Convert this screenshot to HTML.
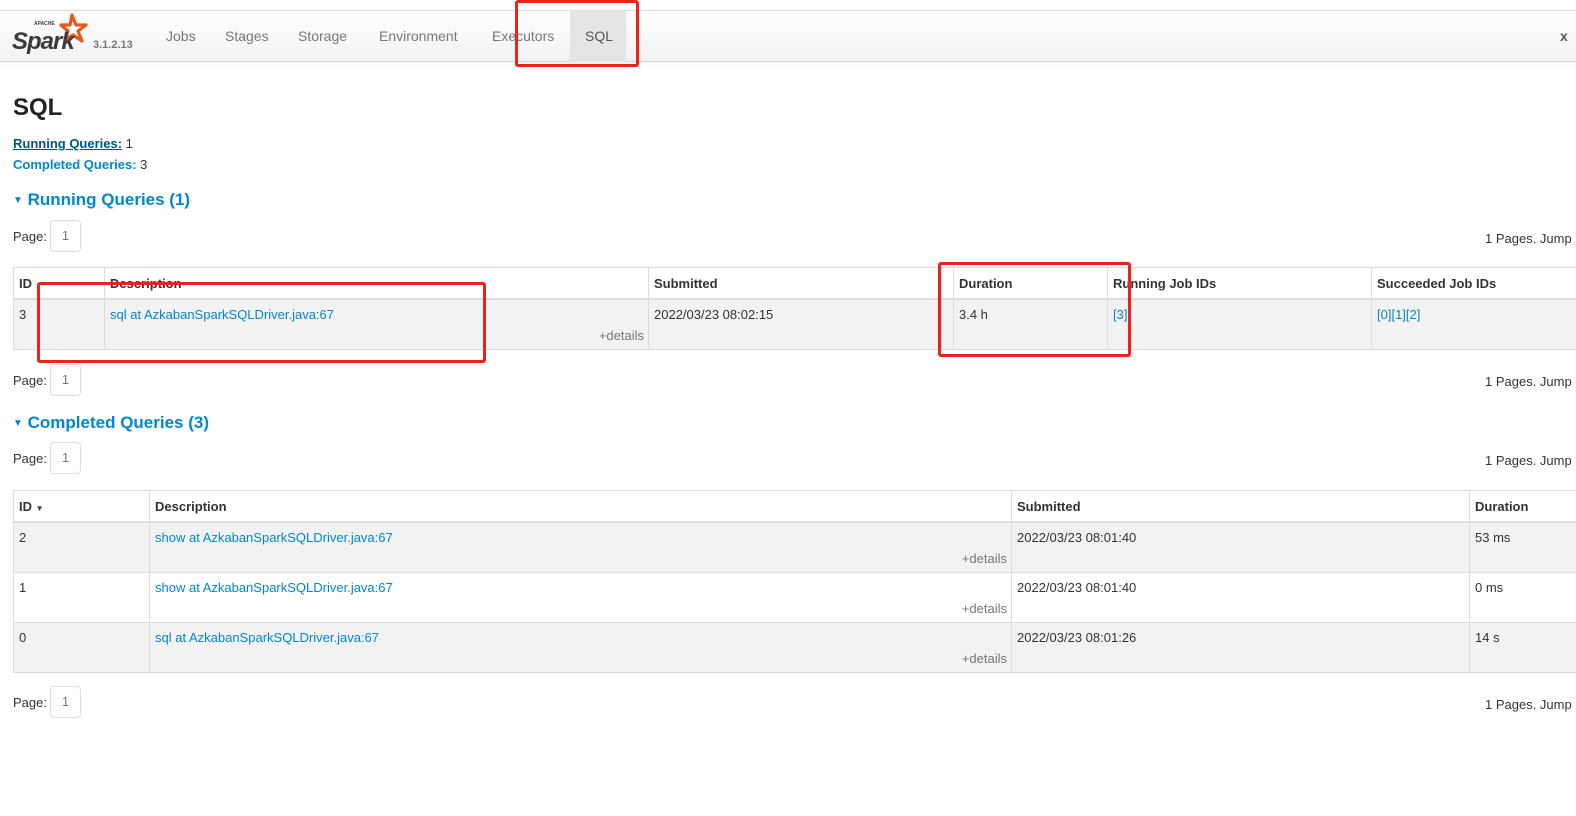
<!DOCTYPE html>
<html><head><meta charset="utf-8">
<style>
*{box-sizing:border-box;margin:0;padding:0}
body{width:1576px;height:816px;overflow:hidden;background:#fff;font-family:"Liberation Sans",sans-serif;font-size:13px;color:#333;position:relative}
.abs{position:absolute;white-space:nowrap}
.nav{position:absolute;left:0;top:10px;width:1576px;height:52px;background:linear-gradient(#fff,#f2f2f2);border-top:1px solid #ddd;border-bottom:1px solid #d4d4d4;box-shadow:0 2px 6px rgba(0,0,0,.06)}
.nav .it{position:absolute;top:17px;font-size:14px;color:#777}
.red{position:absolute;border:3px solid #f0201a;border-radius:3px}
a,.lk{color:#0088cc;text-decoration:none}
.pg{position:absolute;width:31px;height:32px;border:1px solid #ddd;border-radius:4px;color:#777;text-align:center;line-height:30px;font-size:13px}
table{position:absolute;border-collapse:collapse;left:13px}
td,th{border:1px solid #ddd;text-align:left;vertical-align:top;padding:7px 5px;font-size:13px}
th{font-weight:bold;color:#333;height:31px;border-bottom:2px solid #ddd;padding-top:8px}
tr.g td{background:#f2f2f2}
td{height:50px;position:relative}
.det{position:absolute;right:4px;bottom:6px;color:#777}
h4{position:absolute;color:#0088cc;font-size:17px;font-weight:bold}
</style></head><body>
<div class="nav">
  <svg class="abs" style="left:12px;top:2px" width="80" height="44" viewBox="0 0 80 44">
    <path d="M60 2 L64 12 L74 12 L66 18 L70 28 L61 22 L53 27 L56 18 L49 12 L58 12 Z" fill="none" stroke="#e25a1c" stroke-width="3.2" stroke-linejoin="round"/>
    <text x="22" y="12" font-size="5" font-weight="bold" fill="#3c3a3e" font-family="Liberation Sans">APACHE</text>
    <text x="0" y="36" font-size="24" font-weight="bold" font-style="italic" fill="#3c3a3e" font-family="Liberation Sans" letter-spacing="-1">Spark</text>
  </svg>
  <div class="abs" style="left:93px;top:28px;font-size:11px;font-weight:bold;color:#777">3.1.2.13</div>
  <div class="it" style="left:166px">Jobs</div>
  <div class="it" style="left:225px">Stages</div>
  <div class="it" style="left:298px">Storage</div>
  <div class="it" style="left:379px">Environment</div>
  <div class="it" style="left:492px">Executors</div>
  <div style="position:absolute;left:570px;top:0;width:56px;height:51px;background:#e5e5e5"></div>
  <div class="it" style="left:585px;color:#555">SQL</div>
  <div class="it" style="left:1560px;font-weight:bold;color:#555">x</div>
</div>
<div class="red" style="left:515px;top:0px;width:124px;height:67px"></div>

<div class="abs" style="left:13px;top:94px;font-size:24px;font-weight:bold;color:#222">SQL</div>
<div class="abs" style="left:13px;top:136px"><span style="color:#005580;font-weight:bold;text-decoration:underline">Running Queries:</span> 1</div>
<div class="abs" style="left:13px;top:157px"><span class="lk" style="font-weight:bold">Completed Queries:</span> 3</div>

<h4 class="abs" style="left:13px;top:190px"><span style="font-size:10px;position:relative;top:-2px">&#9660;</span> Running Queries (1)</h4>
<div class="abs" style="left:13px;top:229px">Page:</div><div class="pg" style="left:50px;top:220px">1</div>
<div class="abs" style="left:1485px;top:231px">1 Pages. Jump</div>

<table style="top:267px;width:1600px">
<tr><th style="width:91px">ID</th><th style="width:544px">Description</th><th style="width:305px">Submitted</th><th style="width:154px">Duration</th><th style="width:264px">Running Job IDs</th><th>Succeeded Job IDs</th></tr>
<tr class="g"><td>3</td><td><a>sql at AzkabanSparkSQLDriver.java:67</a><span class="det">+details</span></td><td>2022/03/23 08:02:15</td><td>3.4 h</td><td><a>[3]</a></td><td><a>[0][1][2]</a></td></tr>
</table>
<div class="red" style="left:37px;top:282px;width:449px;height:81px"></div>
<div class="red" style="left:938px;top:262px;width:193px;height:95px"></div>

<div class="abs" style="left:13px;top:373px">Page:</div><div class="pg" style="left:50px;top:364px">1</div>
<div class="abs" style="left:1485px;top:374px">1 Pages. Jump</div>

<h4 class="abs" style="left:13px;top:413px"><span style="font-size:10px;position:relative;top:-2px">&#9660;</span> Completed Queries (3)</h4>
<div class="abs" style="left:13px;top:451px">Page:</div><div class="pg" style="left:50px;top:442px">1</div>
<div class="abs" style="left:1485px;top:453px">1 Pages. Jump</div>

<table style="top:490px;width:1600px">
<tr><th style="width:136px">ID <span style="font-size:8px">&#9660;</span></th><th style="width:862px">Description</th><th style="width:458px">Submitted</th><th>Duration</th></tr>
<tr class="g"><td>2</td><td><a>show at AzkabanSparkSQLDriver.java:67</a><span class="det">+details</span></td><td>2022/03/23 08:01:40</td><td>53 ms</td></tr>
<tr><td>1</td><td><a>show at AzkabanSparkSQLDriver.java:67</a><span class="det">+details</span></td><td>2022/03/23 08:01:40</td><td>0 ms</td></tr>
<tr class="g"><td>0</td><td><a>sql at AzkabanSparkSQLDriver.java:67</a><span class="det">+details</span></td><td>2022/03/23 08:01:26</td><td>14 s</td></tr>
</table>

<div class="abs" style="left:13px;top:695px">Page:</div><div class="pg" style="left:50px;top:686px">1</div>
<div class="abs" style="left:1485px;top:697px">1 Pages. Jump</div>
</body></html>
